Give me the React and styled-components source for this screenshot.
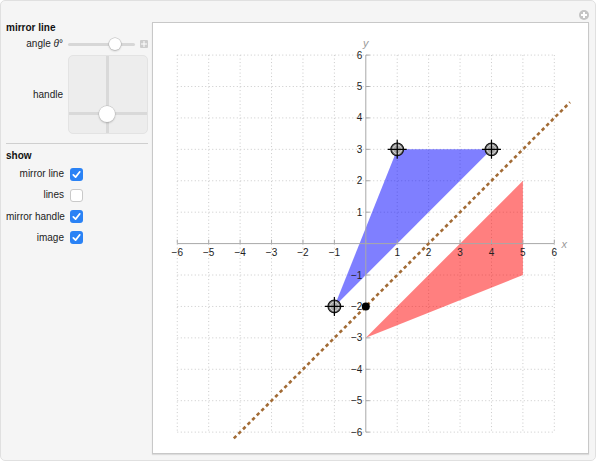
import React from "react";
import styled, { createGlobalStyle } from "styled-components";

const GlobalStyle = createGlobalStyle`
  html, body {
    margin: 0;
    padding: 0;
    background: #ffffff;
  }
  body {
    font-family: "Liberation Sans", Arial, sans-serif;
  }
`;

const Panel = styled.div`
  position: relative;
  box-sizing: border-box;
  width: 596px;
  height: 461px;
  display: flex;
  align-items: flex-start;
  padding: 21px 6px 0 5px;
  background: #f5f5f5;
  border: 1px solid #e0e0e0;
  border-radius: 5px;
`;

const CornerButton = styled.div`
  position: absolute;
  top: 9px;
  right: 6px;
  width: 10px;
  height: 10px;
  border-radius: 50%;
  background: #c4c4c4;

  &::before,
  &::after {
    content: "";
    position: absolute;
    background: #fff;
    left: 50%;
    top: 50%;
    transform: translate(-50%, -50%);
  }
  &::before {
    width: 6px;
    height: 2px;
  }
  &::after {
    width: 2px;
    height: 6px;
  }
`;

const Sidebar = styled.div`
  flex: none;
  width: 142px;
  margin-right: 4px;
  display: flex;
  flex-direction: column;
  font-size: 10px;
  color: #1c1c1c;
`;

const SectionTitle = styled.div`
  font-weight: bold;
  line-height: 12px;
  height: 12px;
  color: #111;
  margin-top: ${(p) => p.$top || 0}px;
`;

const ControlRow = styled.div`
  display: flex;
  align-items: center;
  height: ${(p) => (p.$height ? `${p.$height}px` : "auto")};
  margin-top: ${(p) => p.$top || 0}px;
`;

const RowLabel = styled.div`
  flex: none;
  width: ${(p) => p.$width}px;
  margin-right: ${(p) => p.$gap}px;
  text-align: right;
  line-height: 12px;
  white-space: nowrap;
`;

const Track = styled.div`
  position: relative;
  width: 70px;
  height: 3px;
  border-radius: 2px;
  background: #d7d7d7;
`;

const Thumb = styled.div`
  position: absolute;
  top: 50%;
  width: 12px;
  height: 12px;
  border-radius: 50%;
  background: #fff;
  transform: translate(-50%, -50%);
  box-shadow: 0 0 0 0.5px #b8b8b8, 0 1px 2px rgba(0, 0, 0, 0.25);
`;

const PlusButton = styled.div`
  position: relative;
  flex: none;
  width: 8px;
  height: 8px;
  margin-left: 5px;
  background: #cdcdcd;
  border-radius: 1px;

  &::before,
  &::after {
    content: "";
    position: absolute;
    left: 50%;
    top: 50%;
    transform: translate(-50%, -50%);
    background: #fff;
  }
  &::before {
    width: 6px;
    height: 1px;
  }
  &::after {
    width: 1px;
    height: 6px;
  }
`;

const Pad = styled.div`
  position: relative;
  box-sizing: border-box;
  width: 80px;
  height: 79px;
  background: #ededed;
  border: 1px solid #e3e3e3;
  border-radius: 5px;
  overflow: hidden;
`;

const PadLine = styled.div`
  position: absolute;
  background: #d9d9d9;
  ${(p) =>
    p.$vertical
      ? `top: 0; bottom: 0; width: 3px; left: ${p.$at - 1.5}px;`
      : `left: 0; right: 0; height: 3px; top: ${p.$at - 1.5}px;`}
`;

const PadThumb = styled.div`
  position: absolute;
  width: 16px;
  height: 16px;
  border-radius: 50%;
  background: #fff;
  transform: translate(-50%, -50%);
  box-shadow: 0 0 0 0.5px #bdbdbd, 0 1px 2px rgba(0, 0, 0, 0.25);
`;

const Divider = styled.div`
  height: 1px;
  margin-top: 9px;
  background: #cfcfcf;
`;

const CheckList = styled.div`
  display: flex;
  flex-direction: column;
  gap: 7.33px;
  margin-top: 5px;
`;

const CheckBox = styled.div`
  flex: none;
  box-sizing: border-box;
  width: 13px;
  height: 13px;
  border-radius: 3px;
  display: flex;
  align-items: center;
  justify-content: center;
  background: ${(p) => (p.$checked ? "#2a82f5" : "#ffffff")};
  border: ${(p) => (p.$checked ? "none" : "1px solid #c9c9c9")};
`;

const PlotFrame = styled.div`
  flex: none;
  box-sizing: border-box;
  width: 437px;
  height: 432px;
  background: #ffffff;
  border: 1px solid #c8c8c8;
  box-shadow: 0 1px 1px rgba(0, 0, 0, 0.1);

  svg {
    display: block;
  }
`;

// plot coordinates
const U = 31.42;
const OX = 212.8;
const OY = 220.6;
const X = (x) => OX + x * U;
const Y = (y) => OY - y * U;
const pts = (list) => list.map(([x, y]) => `${X(x)},${Y(y)}`).join(" ");

const ticks = [-6, -5, -4, -3, -2, -1, 0, 1, 2, 3, 4, 5, 6];
const label = (n) => (n < 0 ? `\u2212${-n}` : `${n}`);

const checks = [
  { name: "mirror line", on: true },
  { name: "lines", on: false },
  { name: "mirror handle", on: true },
  { name: "image", on: true },
];

function Locator({ x, y }) {
  return (
    <g transform={`translate(${X(x)},${Y(y)})`}>
      <circle r="6.4" fill="#7d7d7d" stroke="#111" strokeWidth="1.1" />
      <circle r="4.4" fill="#a8a8a8" stroke="#e8e8e8" strokeWidth="0.8" />
      <path d="M-9.5 0H9.5M0 -9.5V9.5" stroke="#000" strokeWidth="1.2" />
    </g>
  );
}

function Plot() {
  return (
    <svg width="435" height="430" fontFamily="'Liberation Sans', Arial, sans-serif">
      <g stroke="#c9c9c9" strokeWidth="1" strokeDasharray="1 2.5">
        {ticks
          .filter((t) => t !== 0)
          .map((t) => (
            <line key={`v${t}`} x1={X(t)} x2={X(t)} y1={Y(6)} y2={Y(-6)} />
          ))}
        {ticks
          .filter((t) => t !== 0)
          .map((t) => (
            <line key={`h${t}`} y1={Y(t)} y2={Y(t)} x1={X(-6)} x2={X(6)} />
          ))}
      </g>

      <polygon points={pts([[-1, -2], [1, 3], [4, 3]])} fill="#0000ff" fillOpacity="0.5" />
      <polygon points={pts([[0, -3], [5, 2], [5, -1]])} fill="#ff0000" fillOpacity="0.5" />

      <g stroke="#a8a8a8" strokeWidth="1">
        <line x1={X(-6)} x2={X(6)} y1={Y(0)} y2={Y(0)} />
        <line x1={X(0)} x2={X(0)} y1={Y(6)} y2={Y(-6)} />
        {ticks.map((t) => (
          <line key={`tx${t}`} x1={X(t)} x2={X(t)} y1={Y(0)} y2={Y(0) - 4} />
        ))}
        {ticks.map((t) => (
          <line key={`ty${t}`} y1={Y(t)} y2={Y(t)} x1={X(0)} x2={X(0) + 4} />
        ))}
      </g>

      <g fontSize="10" fill="#222">
        {ticks
          .filter((t) => t !== 0)
          .map((t) => (
            <text key={`lx${t}`} x={X(t)} y={Y(0) + 12.7} textAnchor="middle">
              {label(t)}
            </text>
          ))}
        {ticks
          .filter((t) => t !== 0)
          .map((t) => (
            <text key={`ly${t}`} x={X(0) - 3.5} y={Y(t) + 3.5} textAnchor="end">
              {label(t)}
            </text>
          ))}
      </g>
      <g fontSize="11" fill="#9a9a9a" fontStyle="italic">
        <text x={408.5} y={225.3}>x</text>
        <text x={210} y={23.5}>y</text>
      </g>

      <line
        x1={X(-4.2)}
        y1={Y(-6.2)}
        x2={X(6.5)}
        y2={Y(4.5)}
        stroke="#a26b35"
        strokeWidth="2.6"
        strokeDasharray="3.5 3"
      />

      <circle cx={X(0)} cy={Y(-2)} r="4" fill="#000" />
      <Locator x={-1} y={-2} />
      <Locator x={1} y={3} />
      <Locator x={4} y={3} />
    </svg>
  );
}

export default function App() {
  return (
    <>
      <GlobalStyle />
      <Panel>
        <CornerButton />
        <Sidebar>
          <SectionTitle>mirror line</SectionTitle>
          <ControlRow $top={3} $height={14}>
            <RowLabel $width={57} $gap={5}>
              angle <i>θ</i>°
            </RowLabel>
            <Track>
              <Thumb style={{ left: "70%" }} />
            </Track>
            <PlusButton />
          </ControlRow>
          <ControlRow $top={4}>
            <RowLabel $width={57} $gap={5}>
              handle
            </RowLabel>
            <Pad>
              <PadLine $vertical $at={38} />
              <PadLine $at={57} />
              <PadThumb style={{ left: 38, top: 58 }} />
            </Pad>
          </ControlRow>
          <Divider />
          <SectionTitle $top={6}>show</SectionTitle>
          <CheckList>
            {checks.map((c) => (
              <ControlRow key={c.name} $height={14}>
                <RowLabel $width={58} $gap={6}>
                  {c.name}
                </RowLabel>
                <CheckBox $checked={c.on}>
                  {c.on && (
                    <svg width="9" height="9" viewBox="0 0 9 9">
                      <path
                        d="M1.3 4.8 L3.6 7.1 L7.8 1.8"
                        fill="none"
                        stroke="#fff"
                        strokeWidth="1.7"
                        strokeLinecap="round"
                        strokeLinejoin="round"
                      />
                    </svg>
                  )}
                </CheckBox>
              </ControlRow>
            ))}
          </CheckList>
        </Sidebar>
        <PlotFrame>
          <Plot />
        </PlotFrame>
      </Panel>
    </>
  );
}
